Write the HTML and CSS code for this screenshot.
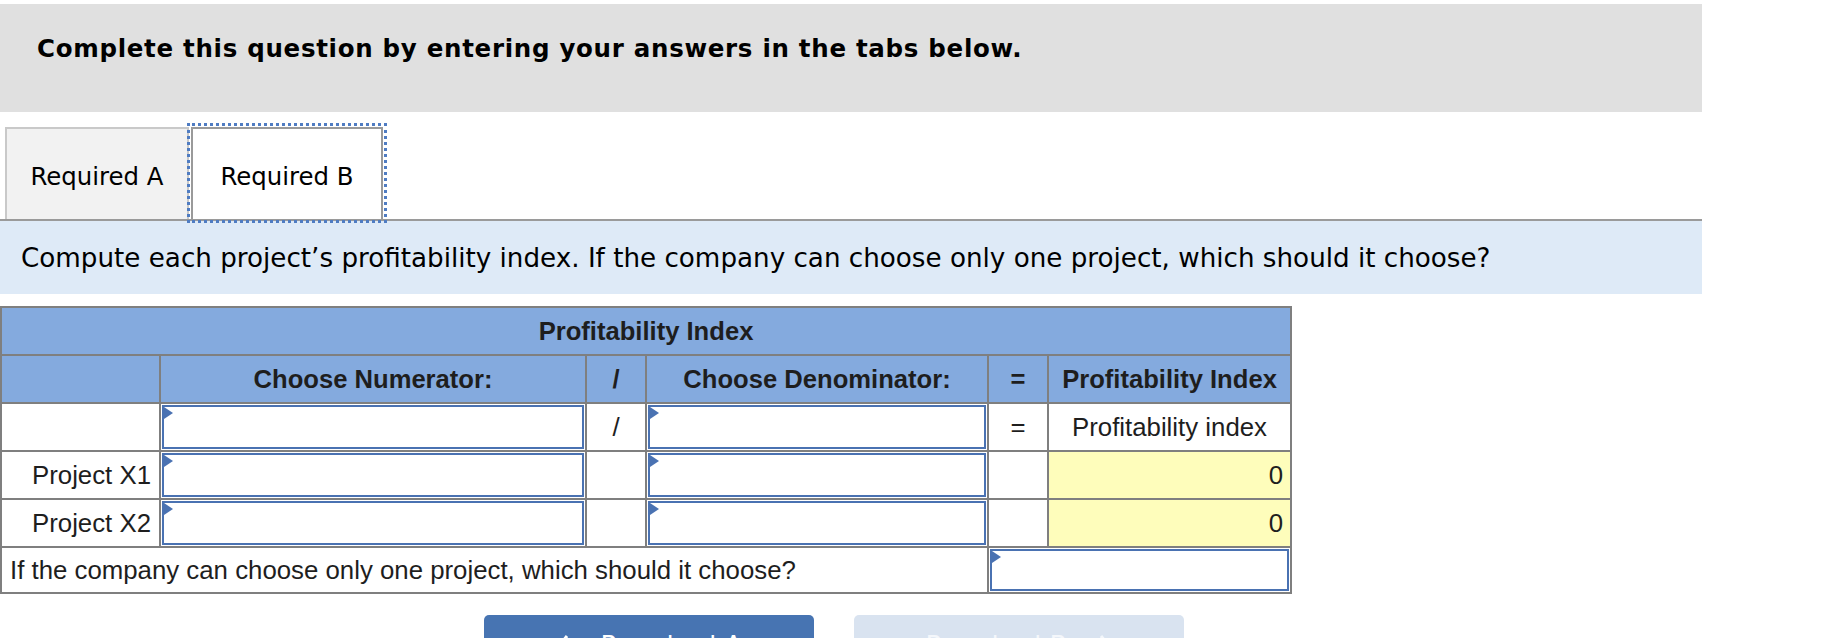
FILE: index.html
```html
<!DOCTYPE html>
<html lang="en">
<head>
<meta charset="utf-8">
<title>Profitability Index</title>
<link rel="stylesheet" href="styles.css">
</head>
<body>
<div class="page">
  <div class="intro"><span class="intro-text">Complete this question by entering your answers in the tabs below.</span></div>

  <div class="tabs">
    <div class="tab tab-a">Required A</div>
    <div class="tab tab-b">Required B</div>
  </div>

  <div class="prompt">Compute each project’s profitability index. If the company can choose only one project, which should it choose?</div>

  <table class="pi">
    <colgroup>
      <col class="c-label">
      <col class="c-num">
      <col class="c-op">
      <col class="c-den">
      <col class="c-op">
      <col class="c-res">
    </colgroup>
    <tr class="hdr">
      <th colspan="6">Profitability Index</th>
    </tr>
    <tr class="hdr">
      <th></th>
      <th>Choose Numerator:</th>
      <th>/</th>
      <th>Choose Denominator:</th>
      <th>=</th>
      <th>Profitability Index</th>
    </tr>
    <tr>
      <td></td>
      <td class="in"><div class="inp"></div></td>
      <td class="op">/</td>
      <td class="in"><div class="inp"></div></td>
      <td class="op">=</td>
      <td class="center">Profitability index</td>
    </tr>
    <tr>
      <td class="label">Project X1</td>
      <td class="in"><div class="inp"></div></td>
      <td></td>
      <td class="in"><div class="inp"></div></td>
      <td></td>
      <td class="result">0</td>
    </tr>
    <tr>
      <td class="label">Project X2</td>
      <td class="in"><div class="inp"></div></td>
      <td></td>
      <td class="in"><div class="inp"></div></td>
      <td></td>
      <td class="result">0</td>
    </tr>
    <tr class="last">
      <td colspan="4" class="question">If the company can choose only one project, which should it choose?</td>
      <td colspan="2" class="in"><div class="inp inp-last"></div></td>
    </tr>
  </table>

  <div class="nav">
    <button class="btn btn-prev" type="button">
      <svg class="chev" width="14" height="24" viewBox="0 0 14 24"><path d="M11 2 L3 12 L11 22" fill="none" stroke="currentColor" stroke-width="3"/></svg>
      <span>Required A</span>
    </button>
    <button class="btn btn-next" type="button">
      <span>Required B</span>
      <svg class="chev" width="14" height="24" viewBox="0 0 14 24"><path d="M3 2 L11 12 L3 22" fill="none" stroke="currentColor" stroke-width="3"/></svg>
    </button>
  </div>
</div>
</body>
</html>
```

FILE: styles.css
```css
html, body {
  margin: 0;
  padding: 0;
  background: #ffffff;
}

.page {
  width: 1702px;
  padding-top: 4px;
  font-family: "DejaVu Sans", Verdana, sans-serif;
  color: #000;
}

.intro {
  height: 108px;
  box-sizing: border-box;
  background: #e0e0e0;
  padding: 30px 0 0 37px;
}

.intro-text {
  font-weight: bold;
  font-size: 24.5px;
  letter-spacing: 0.7px;
  line-height: 30px;
  display: block;
}

.tabs {
  display: flex;
  gap: 2px;
  margin-top: 15px;
  padding-left: 5px;
  border-bottom: 2px solid #9a9a9a;
  height: 92px;
}

.tab {
  box-sizing: border-box;
  height: 92px;
  display: flex;
  align-items: center;
  justify-content: center;
  padding-top: 4px;
  font-size: 24.4px;
  border: 2px solid #c9c9c9;
  border-bottom: none;
}

.tab-a {
  width: 184px;
  background: #f2f2f2;
}

.tab-b {
  width: 192px;
  background: #ffffff;
  border-color: #9a9a9a;
  outline: 3px dotted #4f7cc2;
  outline-offset: 1px;
}

.prompt {
  height: 73px;
  box-sizing: border-box;
  background: #deeaf7;
  font-size: 26.2px;
  line-height: 30px;
  padding: 22px 0 0 21px;
}

.pi {
  margin-top: 12px;
  border-collapse: collapse;
  table-layout: fixed;
  width: 1290px;
  font-family: "Liberation Sans", Arial, sans-serif;
  font-size: 25.8px;
  color: #1e1e1e;
}

.c-label { width: 159px; }
.c-num { width: 426px; }
.c-op { width: 60px; }
.c-den { width: 342px; }
.c-res { width: 243px; }

.pi th,
.pi td {
  border: 2px solid #7f7f7f;
  height: 46px;
  padding: 0;
  text-align: center;
  vertical-align: middle;
}

.pi .hdr th {
  background: #84aade;
  font-weight: bold;
  font-size: 25.6px;
}

.pi .last td {
  height: 44px;
}

.pi td.label {
  text-align: right;
  padding-right: 8px;
}

.pi td.result {
  background: #fefdbb;
  text-align: right;
  padding-right: 7px;
}

.pi td.question {
  text-align: left;
  padding-left: 8px;
}

.inp {
  position: relative;
  box-sizing: border-box;
  height: 44px;
  margin: 1px;
  border: 2px solid #4a72b2;
  background: #ffffff;
}

.inp-last {
  height: 42px;
}

.inp::before {
  content: "";
  position: absolute;
  left: 0;
  top: 0;
  width: 0;
  height: 0;
  border-top: 6px solid transparent;
  border-bottom: 6px solid transparent;
  border-left: 9px solid #4a72b2;
}

.nav {
  display: flex;
  gap: 40px;
  padding-left: 484px;
  margin-top: 21px;
}

.btn {
  width: 330px;
  height: 62px;
  border: none;
  border-radius: 5px;
  display: flex;
  align-items: center;
  justify-content: center;
  gap: 31px;
  font-family: "DejaVu Sans", Verdana, sans-serif;
  font-size: 26px;
  padding: 0;
}

.btn-prev {
  background: #4774b2;
  color: #ffffff;
}

.btn-next {
  background: #d9e3f0;
  color: #f4f7fb;
}
```
